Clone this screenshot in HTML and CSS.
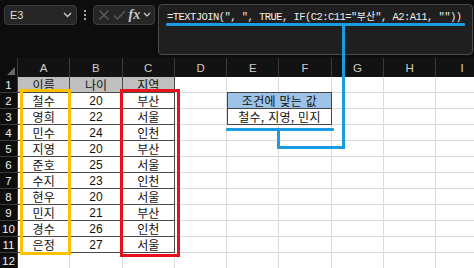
FILE: index.html
```html
<!DOCTYPE html>
<html lang="ko">
<head>
<meta charset="utf-8">
<title>TEXTJOIN</title>
<link rel="stylesheet" href="styles.css">
</head>
<body>
<div class="app">
  <div class="topbar">
    <div class="namebox">
      <span class="ref">E3</span>
      <svg class="chev" width="9" height="6" viewBox="0 0 9 6"><path d="M1 1l3.5 3.5L8 1" fill="none" stroke="#cfcfcf" stroke-width="1.3"/></svg>
    </div>
    <div class="dots"><i></i><i></i><i></i></div>
    <div class="fxbox">
      <svg width="12" height="12" viewBox="0 0 12 12"><path d="M1.5 1.5l9 9M10.5 1.5l-9 9" stroke="#5c5c5c" stroke-width="1.4" fill="none"/></svg>
      <svg width="13" height="12" viewBox="0 0 13 12"><path d="M1 6.5l3.5 3.5L12 2" stroke="#5c5c5c" stroke-width="1.4" fill="none"/></svg>
      <span class="fx">fx</span>
      <svg width="8" height="6" viewBox="0 0 8 6"><path d="M1 1l3 3 3-3" fill="none" stroke="#cfcfcf" stroke-width="1.2"/></svg>
    </div>
    <div class="formula">
      <div class="ftext">=TEXTJOIN(", ", TRUE, IF(C2:C11="<span class="ko">부산</span>", A2:A11, ""))</div>
    </div>
  </div>

  <div class="sheet">
    <div class="corner"></div>
    <div class="ch">A</div><div class="ch">B</div><div class="ch">C</div><div class="ch">D</div><div class="ch">E</div><div class="ch">F</div><div class="ch">G</div><div class="ch">H</div><div class="ch">I</div>

    <div class="rh">1</div>
    <div class="t th">이름</div><div class="t th">나이</div><div class="t th">지역</div>
    <div class="c"></div><div class="c"></div><div class="c"></div><div class="c"></div><div class="c"></div><div class="c"></div>

    <div class="rh">2</div>
    <div class="t">철수</div><div class="t n">20</div><div class="t">부산</div>
    <div class="c"></div><div class="m mh">조건에 맞는 값</div><div class="c"></div><div class="c"></div><div class="c"></div>

    <div class="rh">3</div>
    <div class="t">영희</div><div class="t n">22</div><div class="t">서울</div>
    <div class="c"></div><div class="m mv">철수, 지영, 민지</div><div class="c"></div><div class="c"></div><div class="c"></div>

    <div class="rh">4</div>
    <div class="t">민수</div><div class="t n">24</div><div class="t">인천</div>
    <div class="c"></div><div class="c"></div><div class="c"></div><div class="c"></div><div class="c"></div><div class="c"></div>

    <div class="rh">5</div>
    <div class="t">지영</div><div class="t n">20</div><div class="t">부산</div>
    <div class="c"></div><div class="c"></div><div class="c"></div><div class="c"></div><div class="c"></div><div class="c"></div>

    <div class="rh">6</div>
    <div class="t">준호</div><div class="t n">25</div><div class="t">서울</div>
    <div class="c"></div><div class="c"></div><div class="c"></div><div class="c"></div><div class="c"></div><div class="c"></div>

    <div class="rh">7</div>
    <div class="t">수지</div><div class="t n">23</div><div class="t">인천</div>
    <div class="c"></div><div class="c"></div><div class="c"></div><div class="c"></div><div class="c"></div><div class="c"></div>

    <div class="rh">8</div>
    <div class="t">현우</div><div class="t n">20</div><div class="t">서울</div>
    <div class="c"></div><div class="c"></div><div class="c"></div><div class="c"></div><div class="c"></div><div class="c"></div>

    <div class="rh">9</div>
    <div class="t">민지</div><div class="t n">21</div><div class="t">부산</div>
    <div class="c"></div><div class="c"></div><div class="c"></div><div class="c"></div><div class="c"></div><div class="c"></div>

    <div class="rh">10</div>
    <div class="t">경수</div><div class="t n">26</div><div class="t">인천</div>
    <div class="c"></div><div class="c"></div><div class="c"></div><div class="c"></div><div class="c"></div><div class="c"></div>

    <div class="rh">11</div>
    <div class="t">은정</div><div class="t n">27</div><div class="t">서울</div>
    <div class="c"></div><div class="c"></div><div class="c"></div><div class="c"></div><div class="c"></div><div class="c"></div>

    <div class="rh">12</div>
    <div class="c"></div><div class="c"></div><div class="c"></div><div class="c"></div><div class="c"></div><div class="c"></div><div class="c"></div><div class="c"></div><div class="c"></div>
  </div>

  <div class="hl hl-yellow"></div>
  <div class="hl hl-red"></div>
  <div class="ln ln-under"></div>
  <div class="ln ln-vert"></div>
  <div class="ln ln-bottom"></div>
  <div class="ln ln-short"></div>
  <div class="ln ln-table"></div>
</div>
</body>
</html>
```
FILE: styles.css
```css
* { box-sizing: border-box; }
html, body {
  margin: 0;
  padding: 0;
  background: #0d0d0d;
  width: 474px;
  height: 268px;
  overflow: hidden;
}
.app {
  position: relative;
  width: 474px;
  height: 268px;
  font-family: "Noto Sans CJK KR", "Noto Sans", sans-serif;
}
.topbar {
  display: flex;
  align-items: flex-start;
  height: 58px;
  padding: 4px 1px 0 4px;
}
.namebox, .fxbox {
  height: 20px;
  margin-top: 1px;
  background: #262626;
  border: 1px solid #3c3c3c;
  border-radius: 4px;
  display: flex;
  align-items: center;
}
.namebox {
  width: 73px;
  padding: 0 4px 0 5px;
  justify-content: space-between;
}
.ref {
  font-family: "Liberation Sans", sans-serif;
  font-size: 11px;
  color: #dedede;
}
.dots {
  width: 16px;
  height: 21px;
  display: flex;
  flex-direction: column;
  align-items: center;
  justify-content: center;
  gap: 2px;
}
.dots i {
  display: block;
  width: 2px;
  height: 2px;
  background: #a8a8a8;
}
.fxbox {
  width: 62px;
  padding: 0 3px 0 4px;
  justify-content: space-between;
}
.fx {
  font-family: "Liberation Serif", serif;
  font-style: italic;
  font-weight: bold;
  font-size: 14px;
  color: #c8c8c8;
  line-height: 1;
}
.formula {
  margin-left: 3px;
  flex: 1;
  height: 51px;
  background: #1f1f1f;
  border: 1px solid #4a4a4a;
  border-radius: 4px;
  padding: 4px 0 0 8px;
  font-size: 10.5px;
  line-height: 14px;
}
.ftext {
  font-family: "Liberation Mono", monospace;
  font-size: 10.5px;
  letter-spacing: -0.55px;
  color: #f0f0f0;
  white-space: pre;
  line-height: 14px;
  height: 14px;
}
.ftext .ko {
  font-family: "Noto Sans CJK KR", sans-serif;
  letter-spacing: 0;
  font-size: 10px;
  line-height: 14px;
}
.sheet {
  display: grid;
  grid-template-columns: 18px repeat(9, 52.3px);
  grid-template-rows: 19px repeat(12, 16px);
}
.corner {
  position: relative;
  background: #0d0d0d;
  border-right: 1px solid #3a3a3a;
}
.corner::after {
  content: "";
  position: absolute;
  right: 2px;
  bottom: 2px;
  border-style: solid;
  border-width: 0 0 8px 8px;
  border-color: transparent transparent #6a6a6a transparent;
}
.ch {
  background: #121212;
  color: #cdcdcd;
  font-family: "Liberation Sans", sans-serif;
  font-size: 11.5px;
  display: flex;
  align-items: center;
  justify-content: center;
  border-right: 1px solid #3a3a3a;
}
.rh {
  background: #0d0d0d;
  color: #f2f2f2;
  font-family: "Liberation Sans", sans-serif;
  font-size: 11.5px;
  display: flex;
  align-items: center;
  justify-content: center;
  border-bottom: 1px solid #3a3a3a;
  border-right: 1px solid #3a3a3a;
}
.c, .t, .m {
  background: #fff;
  display: flex;
  align-items: center;
  justify-content: center;
  color: #111;
  font-size: 12px;
  line-height: 1;
  white-space: nowrap;
}
.c {
  border-right: 1px solid #dcdcdc;
  border-bottom: 1px solid #dcdcdc;
}
.t {
  border-right: 1px solid #4a4a4a;
  border-bottom: 1px solid #4a4a4a;
}
.th { background: #bfbfbf; }
.n {
  font-family: "Liberation Sans", sans-serif;
  font-size: 12px;
}
.m {
  grid-column: span 2;
  border: 1px solid #444;
  border-top: none;
  letter-spacing: 0.3px;
}
.mh {
  background: #9dc3e6;
  border-top: 1px solid #444;
  margin-top: -1px;
}
.hl {
  position: absolute;
  border-style: solid;
  border-width: 3px;
}
.hl-yellow {
  left: 20px;
  top: 89px;
  width: 51px;
  height: 166px;
  border-color: #ffc000;
}
.hl-red {
  left: 120px;
  top: 89px;
  width: 60px;
  height: 168px;
  border-color: #e8101c;
}
.ln {
  position: absolute;
  background: #1b9be0;
}
.ln-under { left: 166px; top: 23px; width: 299px; height: 3px; border-radius: 1px; }
.ln-vert { left: 342px; top: 23px; width: 3px; height: 126px; }
.ln-bottom { left: 277px; top: 146px; width: 68px; height: 3px; }
.ln-short { left: 277px; top: 128px; width: 3px; height: 21px; }
.ln-table { left: 226px; top: 128px; width: 108px; height: 3px; border-radius: 1px; }
```
